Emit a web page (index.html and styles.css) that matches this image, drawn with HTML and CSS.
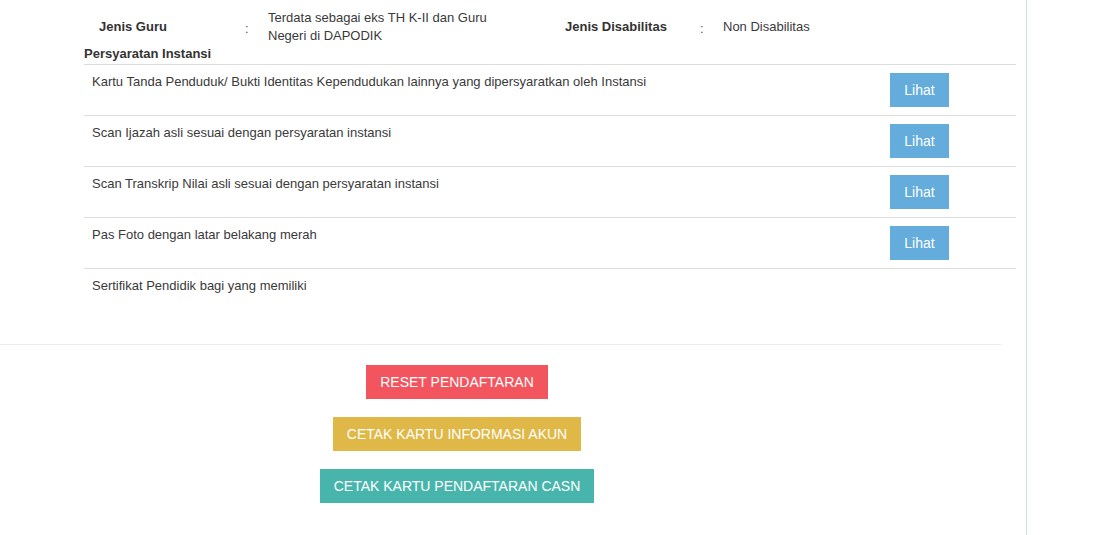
FILE: index.html
```html
<!DOCTYPE html>
<html>
<head>
<meta charset="utf-8">
<link rel="stylesheet" href="styles.css">
</head>
<body>
<div class="panel">
  <div class="info">
    <div class="info-label">Jenis Guru</div>
    <div class="info-colon">:</div>
    <div class="info-value">Terdata sebagai eks TH K-II dan Guru Negeri di DAPODIK</div>
    <div class="info-label2">Jenis Disabilitas</div>
    <div class="info-colon">:</div>
    <div class="info-value2">Non Disabilitas</div>
  </div>
  <div class="section">
    <div class="section-title">Persyaratan Instansi</div>
    <table class="req">
      <tr><td class="req-name">Kartu Tanda Penduduk/ Bukti Identitas Kependudukan lainnya yang dipersyaratkan oleh Instansi</td><td class="req-act"><button class="btn-lihat">Lihat</button></td></tr>
      <tr><td class="req-name">Scan Ijazah asli sesuai dengan persyaratan instansi</td><td class="req-act"><button class="btn-lihat">Lihat</button></td></tr>
      <tr><td class="req-name">Scan Transkrip Nilai asli sesuai dengan persyaratan instansi</td><td class="req-act"><button class="btn-lihat">Lihat</button></td></tr>
      <tr><td class="req-name">Pas Foto dengan latar belakang merah</td><td class="req-act"><button class="btn-lihat">Lihat</button></td></tr>
      <tr class="last"><td class="req-name">Sertifikat Pendidik bagi yang memiliki</td><td class="req-act"></td></tr>
    </table>
  </div>
  <div class="divider"></div>
  <div class="actions">
    <button class="btn btn-red">RESET PENDAFTARAN</button>
    <button class="btn btn-yellow">CETAK KARTU INFORMASI AKUN</button>
    <button class="btn btn-teal">CETAK KARTU PENDAFTARAN CASN</button>
  </div>
</div>
</body>
</html>
```
FILE: styles.css
```css
html, body {
  margin: 0;
  padding: 0;
  background: #ffffff;
  font-family: "Liberation Sans", Arial, sans-serif;
  font-size: 13px;
  color: #3a3a3a;
}
.panel {
  width: 1027px;
  height: 535px;
  border-right: 1px solid #c4e4e8;
  box-sizing: border-box;
  overflow: hidden;
}
.info {
  display: flex;
  align-items: center;
  padding: 9px 0 0 99px;
  height: 36px;
  line-height: 18px;
}
.info-label, .info-label2 {
  font-weight: bold;
  color: #333;
}
.info-label { width: 146px; }
.info-colon { width: 23px; color: #555; padding-top: 4px; }
.info-value { width: 239px; margin-right: 58px; }
.info-label2 { width: 135px; }
.section {
  margin-left: 84px;
  width: 932px;
}
.section-title {
  font-weight: bold;
  color: #333;
  line-height: 18px;
  height: 19px;
}
.req {
  width: 100%;
  border-collapse: collapse;
}
.req td {
  border-top: 1px solid #dddddd;
  padding: 8px;
  vertical-align: top;
  line-height: 18px;
}
.req tr:not(.last) td { border-bottom: 1px solid #dddddd; }
.req .last td { height: 35px; }
.req-act { width: 118px; }
.btn-lihat {
  font-family: "Liberation Sans", Arial, sans-serif;
  font-size: 14px;
  color: #fff;
  background: #63acdb;
  border: none;
  padding: 0;
  width: 59px;
  height: 34px;
  display: block;
}
.divider {
  width: 1001px;
  height: 1px;
  background: #ececec;
  margin-top: 24px;
}
.actions {
  width: 914px;
  display: flex;
  flex-direction: column;
  align-items: center;
  gap: 18px;
  padding-top: 20px;
}
.btn {
  font-family: "Liberation Sans", Arial, sans-serif;
  font-size: 14px;
  color: #fff;
  border: none;
  height: 34px;
  padding: 0 14px;
}
.btn-red { background: #f2555e; }
.btn-yellow { background: #dfb847; }
.btn-teal { background: #48b5ad; }
```
